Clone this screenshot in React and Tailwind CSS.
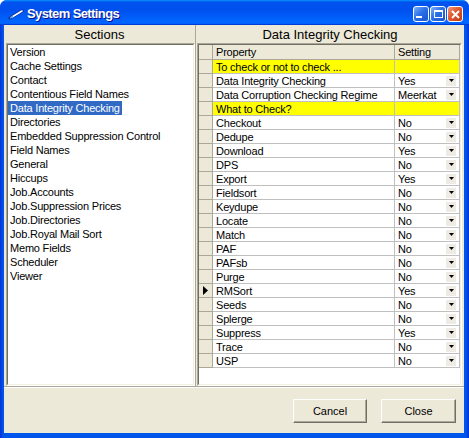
const SECTIONS = [
  "Version",
  "Cache Settings",
  "Contact",
  "Contentious Field Names",
  "Data Integrity Checking",
  "Directories",
  "Embedded Suppression Control",
  "Field Names",
  "General",
  "Hiccups",
  "Job.Accounts",
  "Job.Suppression Prices",
  "Job.Directories",
  "Job.Royal Mail Sort",
  "Memo Fields",
  "Scheduler",
  "Viewer",
];

const ROWS = [
  { label: "To check or not to check ...", category: true },
  { label: "Data Integrity Checking", value: "Yes" },
  { label: "Data Corruption Checking Regime", value: "Meerkat" },
  { label: "What to Check?", category: true },
  { label: "Checkout", value: "No" },
  { label: "Dedupe", value: "No" },
  { label: "Download", value: "Yes" },
  { label: "DPS", value: "No" },
  { label: "Export", value: "Yes" },
  { label: "Fieldsort", value: "No" },
  { label: "Keydupe", value: "No" },
  { label: "Locate", value: "No" },
  { label: "Match", value: "No" },
  { label: "PAF", value: "No" },
  { label: "PAFsb", value: "No" },
  { label: "Purge", value: "No" },
  { label: "RMSort", value: "Yes", current: true },
  { label: "Seeds", value: "No" },
  { label: "Splerge", value: "No" },
  { label: "Suppress", value: "Yes" },
  { label: "Trace", value: "No" },
  { label: "USP", value: "No" },
];

const TitleButton = ({ kind }) => {
  const bg =
    kind === "close"
      ? "bg-[linear-gradient(135deg,#F29B7E,#E0582E_45%,#C43A10)]"
      : "bg-[linear-gradient(135deg,#7DB2FA,#2B71E8_45%,#1A52CF)]";
  return (
    <div
      className={`w-[16px] h-[16px] rounded-[3px] border border-white ${bg} flex items-center justify-center`}
    >
      {kind === "min" && (
        <div className="w-[6px] h-[2px] bg-white self-end mb-[3px] mr-[4px]" />
      )}
      {kind === "max" && (
        <div className="w-[9px] h-[8px] border border-white border-t-2" />
      )}
      {kind === "close" && (
        <svg width="9" height="9" viewBox="0 0 9 9">
          <path d="M1 1L8 8M8 1L1 8" stroke="white" strokeWidth="2" />
        </svg>
      )}
    </div>
  );
};

const Dropdown = () => (
  <div className="w-[10px] h-[10px] mr-[3px] bg-[#EDEBE3] flex items-center justify-center">
    <svg width="5" height="3" viewBox="0 0 5 3">
      <path d="M0 0H5L2.5 3Z" fill="#000" />
    </svg>
  </div>
);

const Inset = ({ className, children }) => (
  <div
    className={`border border-t-[#ACA899] border-l-[#ACA899] border-r-white border-b-white ${className}`}
  >
    <div className="w-full h-full border border-t-[#716F64] border-l-[#716F64] border-r-[#F1EFE2] border-b-[#F1EFE2] bg-white overflow-hidden">
      {children}
    </div>
  </div>
);

const Button = ({ children, width }) => (
  <button
    className={`${width} h-[24px] bg-[#ECE9D8] border border-t-white border-l-white border-r-[#716F64] border-b-[#716F64] shadow-[inset_-1px_-1px_0_#ACA899] text-[11px] text-black`}
  >
    {children}
  </button>
);

export default function App() {
  return (
    <div className="w-[469px] h-[438px] bg-white font-['Liberation_Sans',Arial,sans-serif] text-black">
      <div className="w-full h-full flex flex-col rounded-t-[7px] overflow-hidden bg-[linear-gradient(90deg,#0831D9,#0055EA_3px,#0055EA_calc(100%-3px),#0831D9)]">
        {/* TITLE BAR */}
        <div className="h-[25px] flex items-center pt-[3px] pl-[8px] pr-[6px] bg-[linear-gradient(180deg,#0997ff,#0053ee_8%,#0050ee_40%,#06f_88%,#06f_93%,#005bff_95%,#003dd7_96%,#003dd7)]">
          <svg width="16" height="14" viewBox="0 0 16 14">
            <path d="M2 11L14 4" stroke="#0A2A8C" strokeWidth="3" strokeLinecap="round" />
            <path d="M4 10L14 4" stroke="#fff" strokeWidth="1.6" strokeLinecap="round" />
            <path d="M2 11L5 9.5" stroke="#5AA0F5" strokeWidth="1.5" />
          </svg>
          <span className="ml-[3px] text-white font-bold text-[13px] [text-shadow:1px_1px_#0F1089] tracking-[-0.6px]">
            System Settings
          </span>
          <div className="ml-auto flex gap-[1px]">
            <TitleButton kind="min" />
            <TitleButton kind="max" />
            <TitleButton kind="close" />
          </div>
        </div>

        {/* BODY */}
        <div className="flex-1 flex flex-col ml-[4px] mr-[5px] mb-[5px] bg-[#ECE9D8] min-h-0">
          <div className="h-[362px] flex border-b border-[#ACA899]">
            {/* SECTIONS */}
            <div className="w-[192px] flex flex-col border-r border-[#ACA899]">
              <div className="h-[18px] leading-[19px] text-[13px] text-center">
                Sections
              </div>
              <Inset className="flex-1 ml-[2px]">
                {SECTIONS.map((s, i) => (
                  <div
                    key={i}
                    className="h-[14px] text-[11px] leading-[15px] tracking-[-0.2px]"
                  >
                    <span
                      className={`px-[2px] inline-block h-[14px] ${
                        i === 4 ? "bg-[#316AC5] text-white" : ""
                      }`}
                    >
                      {s}
                    </span>
                  </div>
                ))}
              </Inset>
            </div>

            {/* GRID */}
            <div className="flex-1 flex flex-col">
              <div className="h-[18px] leading-[19px] text-[13px] text-center">
                Data Integrity Checking
              </div>
              <Inset className="flex-1 ml-[1px] mr-[2px]">
                <div className="flex h-[15px] text-[11px] tracking-[-0.2px]">
                  <div className="w-[14px] bg-[#ECE9D8] border-r border-b border-[#ACA899]" />
                  <div className="w-[182px] bg-[#ECE9D8] border-r border-b border-[#ACA899] pl-[3px] leading-[15px]">
                    Property
                  </div>
                  <div className="w-[65px] bg-[#ECE9D8] border-r border-b border-[#ACA899] pl-[3px] leading-[15px]">
                    Setting
                  </div>
                </div>
                {ROWS.map((r, i) => (
                  <div key={i} className="flex h-[14px] text-[11px] tracking-[-0.2px]">
                    <div className="w-[14px] bg-[#ECE9D8] border-r border-b border-[#ACA899] flex items-center pl-[4px]">
                      {r.current && (
                        <svg width="5" height="9" viewBox="0 0 5 9">
                          <path d="M0 0L5 4.5L0 9Z" fill="#000" />
                        </svg>
                      )}
                    </div>
                    <div
                      className={`w-[182px] border-r border-b border-[#C0C0C0] pl-[3px] leading-[14px] whitespace-nowrap overflow-hidden ${
                        r.category ? "bg-[#FFFF00]" : ""
                      }`}
                    >
                      {r.label}
                    </div>
                    <div
                      className={`w-[65px] border-r border-b border-[#C0C0C0] pl-[3px] leading-[14px] flex items-center justify-between ${
                        r.category ? "bg-[#FFFF00]" : ""
                      }`}
                    >
                      <span>{r.value}</span>
                      {!r.category && <Dropdown />}
                    </div>
                  </div>
                ))}
              </Inset>
            </div>
          </div>

          {/* BUTTONS */}
          <div className="flex-1 border-t border-white flex justify-end items-start pt-[11px] pr-[8px] gap-[14px]">
            <Button width="w-[74px]">Cancel</Button>
            <Button width="w-[75px]">Close</Button>
          </div>
        </div>
      </div>
    </div>
  );
}
